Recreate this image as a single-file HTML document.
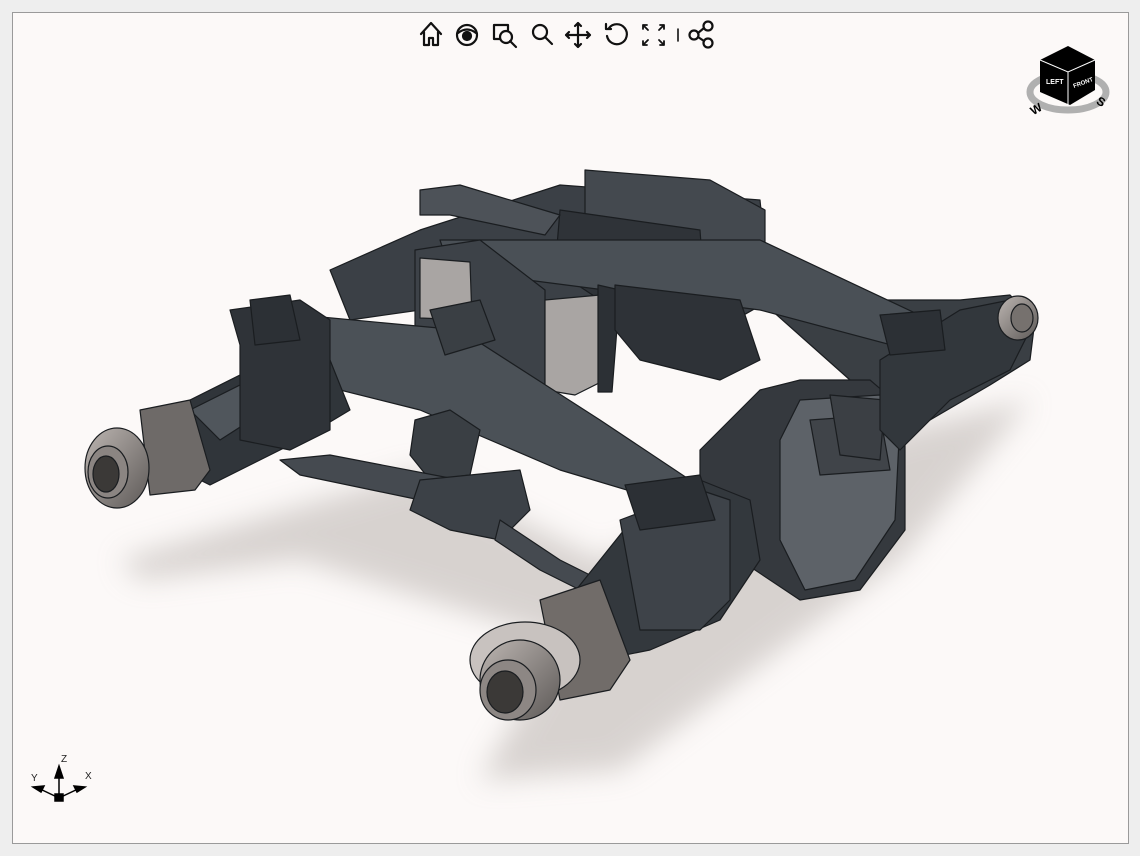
<!DOCTYPE html>
<html><head><meta charset="utf-8"><style>
html,body{margin:0;padding:0;background:#eeeeee;width:1140px;height:856px;overflow:hidden;font-family:"Liberation Sans",sans-serif}
#v{position:absolute;left:12px;top:12px;width:1115px;height:830px;background:#fcf9f8;border:1px solid #9a9a9a}
svg{position:absolute;left:0;top:0}
</style></head><body>
<div id="v"></div>
<svg width="1140" height="856" viewBox="0 0 1140 856">
<defs>
<filter id="b" x="-20%" y="-20%" width="140%" height="140%"><feGaussianBlur stdDeviation="14"/></filter>
<linearGradient id="hub" x1="0" y1="0" x2="1" y2="1"><stop offset="0" stop-color="#bdb6b2"/><stop offset="1" stop-color="#5d5957"/></linearGradient>
</defs>
<!-- shadows -->
<g filter="url(#b)" fill="#cfc9c6" opacity="0.8">
<polygon points="120,560 420,470 600,560 900,430 1030,400 900,560 620,770 480,780 560,640 300,560 140,580"/>
</g>
<g stroke="#1a1d20" stroke-width="1.2" stroke-linejoin="round">
<!-- far right axle / top structures -->
<polygon points="760,300 960,300 1010,295 1035,320 1030,360 990,385 930,420 880,420 850,380" fill="#3a3f44"/>
<polygon points="330,270 420,230 560,185 760,200 770,300 700,340 560,320 420,310 350,320" fill="#3b4046"/>
<polygon points="585,170 710,180 765,210 765,300 705,320 600,300 585,240" fill="#44494f"/>
<polygon points="560,210 700,230 705,300 600,300 555,270" fill="#2f3338"/>
<!-- upper leaf spring -->
<polygon points="440,240 760,240 930,320 910,350 760,310 450,270" fill="#4a5056"/>
<polygon points="420,190 460,185 560,215 545,235 450,215 420,215" fill="#4d5258"/>
<!-- center plates -->
<polygon points="415,250 480,240 545,290 545,390 500,400 415,340" fill="#3d4248"/>
<polygon points="420,258 470,262 472,320 420,318" fill="#a9a5a3"/>
<polygon points="545,300 600,295 605,380 575,395 545,390" fill="#a9a5a3"/>
<polygon points="598,285 620,290 612,392 598,392" fill="#2c3035"/>
<!-- middle diff area -->
<polygon points="615,285 740,300 760,360 720,380 640,360 615,330" fill="#2e3237"/>
<!-- lower leaf spring (left) -->
<polygon points="240,330 300,315 460,330 600,420 690,480 660,500 560,470 420,410 260,370" fill="#4b5157"/>
<!-- left front axle -->
<polygon points="150,420 250,370 330,360 350,410 300,440 210,485 180,470" fill="#30353a"/>
<polygon points="190,410 250,380 290,395 220,440" fill="#50565c"/>
<polygon points="230,310 300,300 330,320 330,430 290,450 240,440 240,345" fill="#2f3338"/>
<!-- left hub -->
<polygon points="140,410 190,400 210,470 195,490 150,495" fill="#6e6a68"/>
<ellipse cx="117" cy="468" rx="32" ry="40" fill="url(#hub)"/>
<ellipse cx="108" cy="472" rx="20" ry="26" fill="#8b8582"/>
<ellipse cx="106" cy="474" rx="13" ry="18" fill="#3b3937"/>
<!-- center front pieces -->
<polygon points="415,420 450,410 480,430 470,475 430,480 410,455" fill="#3a3f44"/>
<polygon points="280,460 330,455 460,480 470,500 420,500 300,475" fill="#454a50"/>
<polygon points="420,480 520,470 530,510 500,540 450,530 410,510" fill="#3c4147"/>
<polygon points="500,520 560,560 600,580 580,590 540,570 495,540" fill="#454a50"/>
<!-- rear housing -->
<polygon points="700,450 760,390 800,380 870,380 905,410 905,530 860,590 800,600 740,560 700,500" fill="#35393e"/>
<polygon points="800,400 880,395 900,420 895,520 855,580 805,590 780,540 780,440" fill="#5d6268"/>
<polygon points="810,420 880,415 890,470 820,475" fill="#404449"/>
<polygon points="830,395 885,400 880,460 840,455" fill="#3b3f44"/>
<!-- rear right axle -->
<polygon points="880,360 960,310 1010,300 1030,330 1010,370 950,400 900,450 880,430" fill="#32373c"/>
<ellipse cx="1018" cy="318" rx="20" ry="22" fill="url(#hub)"/>
<ellipse cx="1022" cy="318" rx="11" ry="14" fill="#76716e"/>
<!-- rear bottom axle -->
<polygon points="560,610 640,510 700,480 750,500 760,560 720,620 650,650 600,660" fill="#33383d"/>
<polygon points="620,520 700,490 730,500 730,600 700,630 640,630" fill="#3e4349"/>
<polygon points="540,600 600,580 630,660 610,690 560,700" fill="#716c69"/>
<ellipse cx="525" cy="660" rx="55" ry="38" fill="#c8c2bf"/>
<ellipse cx="520" cy="680" rx="40" ry="40" fill="url(#hub)"/>
<ellipse cx="508" cy="690" rx="28" ry="30" fill="#8d8784"/>
<ellipse cx="505" cy="692" rx="18" ry="21" fill="#3b3937"/>
<!-- small brackets -->
<polygon points="250,300 290,295 300,340 255,345" fill="#2c3035"/>
<polygon points="625,485 700,475 715,520 640,530" fill="#2c3035"/>
<polygon points="880,315 940,310 945,350 890,355" fill="#2c3035"/>
<polygon points="430,310 480,300 495,340 445,355" fill="#3a3f44"/>
</g>
<!-- toolbar -->
<g fill="none" stroke="#111" stroke-width="2.2" stroke-linecap="round" stroke-linejoin="round">
<path d="M421 34 L431 23 L441 34 M424 32 V45 H429 V38 H433 V45 H438 V32"/>
<circle cx="467" cy="35" r="10"/><path d="M458 33 Q467 26 476 33" /><circle cx="467" cy="36" r="4" fill="#111"/>
<path d="M500 39 H494 V25 H508 V30"/><circle cx="506" cy="37" r="6"/><path d="M510 41 L516 47"/>
<circle cx="540" cy="32" r="7"/><path d="M545 37 L552 44"/>
<path d="M578 23 V47 M566 35 H590 M575 26 L578 23 L581 26 M575 44 L578 47 L581 44 M569 32 L566 35 L569 38 M587 32 L590 35 L587 38"/>
<path d="M609 28 A10 10 0 1 1 607 36 M606 24 V29 H611"/>
<path d="M643 25 L648 30 M643 25 V29 M643 25 H647 M664 25 L659 30 M664 25 V29 M664 25 H660 M643 45 L648 40 M643 45 V41 M643 45 H647 M664 45 L659 40 M664 45 V41 M664 45 H660" stroke-width="1.8"/>
<path d="M678 29 V41" stroke-width="1.6"/>
<circle cx="708" cy="26" r="4.5"/><circle cx="708" cy="43" r="4.5"/><circle cx="694" cy="35" r="4.5"/><path d="M698 33 L704 28 M698 37 L704 41"/>
</g>
<!-- view cube -->
<ellipse cx="1068" cy="92" rx="38" ry="18" fill="none" stroke="#b0b0b0" stroke-width="7"/>
<polygon points="1040,60 1068,46 1095,60 1095,90 1070,105 1040,92" fill="#000"/>
<path d="M1040,60 L1068,72 L1095,60 M1068,72 V105" stroke="#fff" stroke-width="1" fill="none"/>
<text x="1046" y="84" font-size="7" fill="#fff" font-weight="bold">LEFT</text>
<text x="1074" y="88" font-size="6" fill="#fff" font-weight="bold" transform="rotate(-20 1074 88)">FRONT</text>
<text x="1030" y="113" font-size="12" font-weight="bold" fill="#000" transform="rotate(-30 1036 108)">W</text>
<text x="1098" y="106" font-size="12" font-weight="bold" fill="#000" transform="rotate(30 1102 100)">S</text>
<!-- axis -->
<g stroke="#000" stroke-width="1.5" fill="#000">
<path d="M59 798 V772"/><polygon points="55,778 59,766 63,778"/>
<path d="M59 798 L38 788"/><polygon points="33,787 44,786 41,792"/>
<path d="M59 798 L80 788"/><polygon points="85,787 74,786 77,792"/>
<rect x="55" y="794" width="8" height="7"/>
</g>
<g font-size="10" fill="#222"><text x="61" y="762">Z</text><text x="31" y="781">Y</text><text x="85" y="779">X</text></g>
</svg>
</body></html>
